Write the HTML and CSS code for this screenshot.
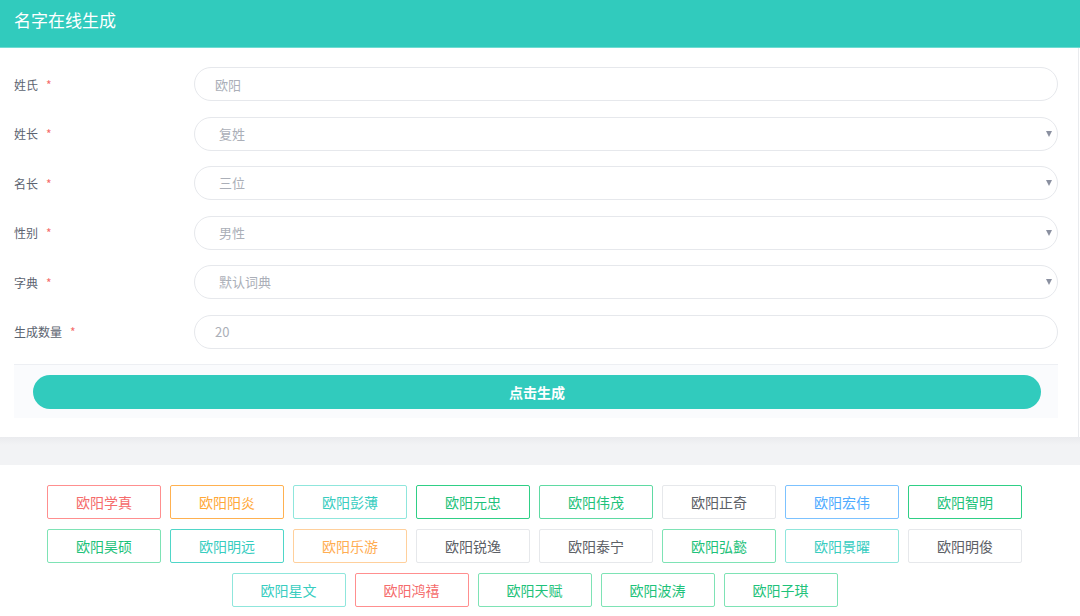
FILE: index.html
```html
<!DOCTYPE html>
<html lang="zh-CN">
<head>
  <meta charset="UTF-8">
  <meta name="viewport" content="width=device-width, initial-scale=1.0">
  <title>名字在线生成</title>
  <link rel="stylesheet" href="styles.css">
</head>
<body>
  <div class="topbar">名字在线生成</div>

  <div class="panel">
    <form class="name-form">
      <div class="form-row">
        <label class="form-label">姓氏<span class="req">*</span></label>
        <div class="field"><input class="pill-input" type="text" placeholder="欧阳"></div>
      </div>
      <div class="form-row">
        <label class="form-label">姓长<span class="req">*</span></label>
        <div class="field select"><span class="pill-input">复姓</span><i class="caret"></i></div>
      </div>
      <div class="form-row">
        <label class="form-label">名长<span class="req">*</span></label>
        <div class="field select"><span class="pill-input">三位</span><i class="caret"></i></div>
      </div>
      <div class="form-row">
        <label class="form-label">性别<span class="req">*</span></label>
        <div class="field select"><span class="pill-input">男性</span><i class="caret"></i></div>
      </div>
      <div class="form-row">
        <label class="form-label">字典<span class="req">*</span></label>
        <div class="field select"><span class="pill-input">默认词典</span><i class="caret"></i></div>
      </div>
      <div class="form-row">
        <label class="form-label">生成数量<span class="req">*</span></label>
        <div class="field"><input class="pill-input" type="text" placeholder="20"></div>
      </div>
      <div class="form-footer">
        <button class="gen-btn" type="button">点击生成</button>
      </div>
    </form>
  </div>

  <div class="gap-band"></div>

  <div class="results">
    <span class="tag red">欧阳学真</span>
    <span class="tag orange">欧阳阳炎</span>
    <span class="tag teal-light">欧阳彭薄</span>
    <span class="tag green">欧阳元忠</span>
    <span class="tag green-mid">欧阳伟茂</span>
    <span class="tag gray">欧阳正奇</span>
    <span class="tag blue">欧阳宏伟</span>
    <span class="tag green">欧阳智明</span>

    <span class="tag green-light">欧阳昊硕</span>
    <span class="tag teal">欧阳明远</span>
    <span class="tag orange-light">欧阳乐游</span>
    <span class="tag gray">欧阳锐逸</span>
    <span class="tag gray">欧阳泰宁</span>
    <span class="tag green-light">欧阳弘懿</span>
    <span class="tag teal-light">欧阳景曜</span>
    <span class="tag gray">欧阳明俊</span>

    <span class="tag teal-light">欧阳星文</span>
    <span class="tag red">欧阳鸿禧</span>
    <span class="tag green-light">欧阳天赋</span>
    <span class="tag green-light">欧阳波涛</span>
    <span class="tag green-light">欧阳子琪</span>
  </div>
</body>
</html>
```

FILE: styles.css
```css
body {
  margin: 0;
  background-color: #ffffff;
  font-family: "Noto Sans CJK SC", "Noto Sans", sans-serif;
  color: #5c6370;
}

.topbar {
  height: 48px;
  box-sizing: border-box;
  padding: 8px 14px 0;
  background-color: #31cbbd;
  border-bottom: 1px solid #6fdcd2;
  color: #ffffff;
  font-size: 17px;
  line-height: 24px;
}

.panel {
  margin-right: 1px;
  border-right: 1px solid #e9ebee;
  padding: 19px 20px 19px 14px;
  background-color: #ffffff;
}

.form-row {
  display: flex;
  align-items: center;
  height: 34px;
  margin-bottom: 15.5px;
}

.form-label {
  width: 180px;
  flex-shrink: 0;
  font-size: 12px;
  color: #5c6370;
}

.req {
  color: #f56c6c;
  margin-left: 8px;
  font-size: 12px;
}

.field {
  position: relative;
  flex: 1;
  height: 34px;
}

.pill-input {
  display: block;
  box-sizing: border-box;
  width: 100%;
  height: 34px;
  padding: 0 20px;
  border: 1px solid #e6e8ec;
  border-radius: 17px;
  background: #ffffff;
  font-family: inherit;
  font-size: 13px;
  line-height: 32px;
  color: #abafb8;
  outline: none;
}

.pill-input::placeholder {
  color: #abafb8;
}

.select .pill-input {
  padding-left: 24px;
}

.caret {
  position: absolute;
  right: 6px;
  top: 14px;
  width: 0;
  height: 0;
  border-left: 3px solid transparent;
  border-right: 3px solid transparent;
  border-top: 6px solid #8a90a0;
}

.form-footer {
  margin-top: 15px;
  padding: 10px 17px 9px 19px;
  border-top: 1px solid #edeff3;
  background-color: #fafbfd;
}

.gen-btn {
  display: block;
  width: 100%;
  height: 34px;
  border: none;
  border-radius: 17px;
  background-color: #31cbbd;
  color: #ffffff;
  font-family: inherit;
  font-size: 14px;
  font-weight: bold;
}

.gap-band {
  height: 28px;
  background: linear-gradient(#eaebee, #f2f3f5 8px);
}

.results {
  display: flex;
  flex-wrap: wrap;
  justify-content: center;
  gap: 10px 9px;
  padding: 20px 11px 10px 0;
}

.tag {
  box-sizing: border-box;
  width: 114px;
  height: 34px;
  border: 1px solid;
  border-radius: 2px;
  font-size: 14px;
  line-height: 32px;
  text-align: center;
}

.red { border-color: #ff8f8f; color: #f56c6c; }
.orange { border-color: #ffb150; color: #ffa838; }
.orange-light { border-color: #ffd09c; color: #ffad52; }
.teal { border-color: #4fd6c8; color: #38cdbf; }
.teal-light { border-color: #8fe6dc; color: #38cdbf; }
.green { border-color: #2fcf86; color: #1ec27a; }
.green-mid { border-color: #5fdaa3; color: #1ec27a; }
.green-light { border-color: #7ee3b5; color: #1ec27a; }
.blue { border-color: #7cc2ff; color: #4fabff; }
.gray { border-color: #e6e8eb; color: #5c6066; }
```
